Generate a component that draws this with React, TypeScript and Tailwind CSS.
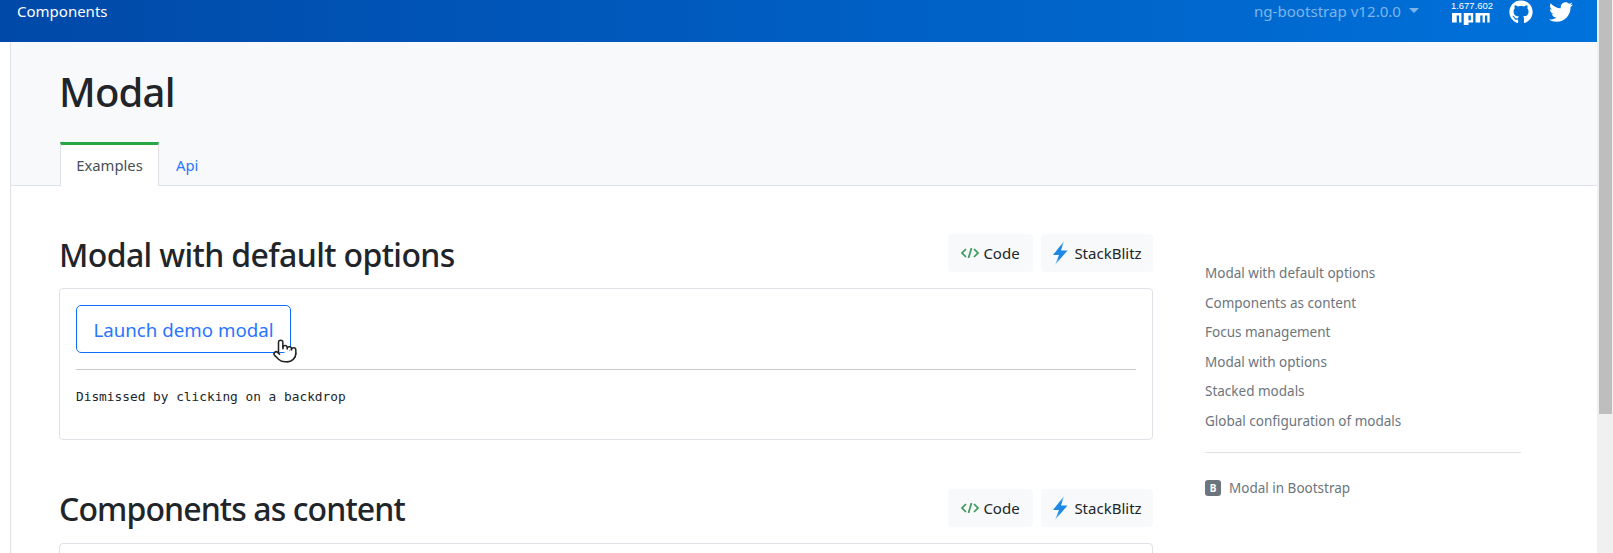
import { FaGithub, FaTwitter } from 'react-icons/fa';
import { Pointer } from 'lucide-react';

const tocLinks = [
  'Modal with default options',
  'Components as content',
  'Focus management',
  'Modal with options',
  'Stacked modals',
  'Global configuration of modals',
];

function DemoButtons() {
  return (
    <div className="flex gap-[8px]">
      <a className="flex h-[38px] w-[85px] items-center justify-center rounded bg-[#f8f9fa] text-[15px] text-[#212529]">
        <svg viewBox="0 0 18 10" className="mr-[4px] h-[10px] w-[18px]" fill="none" stroke="#3a9a5c" strokeWidth="1.7">
          <path d="M5 1 L1 5 L5 9" />
          <path d="M10.5 0 L7.5 10" />
          <path d="M13 1 L17 5 L13 9" />
        </svg>
        Code
      </a>
      <a className="flex h-[38px] w-[112px] items-center justify-center rounded bg-[#f8f9fa] text-[15px] text-[#212529]">
        <svg viewBox="0 0 16 24" className="mr-[6px] h-[24px] w-[16px]">
          <defs>
            <linearGradient id="bolt" x1="0" y1="1" x2="0" y2="0">
              <stop offset="0" stopColor="#9fd0fb" />
              <stop offset="0.3" stopColor="#1e88e5" />
              <stop offset="0.75" stopColor="#1e88e5" />
              <stop offset="1" stopColor="#9fd0fb" />
            </linearGradient>
          </defs>
          <path d="M12 0 L1 14 H7 L3 24 L15.5 9.5 H9 Z" fill="url(#bolt)" />
        </svg>
        StackBlitz
      </a>
    </div>
  );
}

function SectionHeader({ title, titleClass }: { title: string; titleClass: string }) {
  return (
    <div className="flex h-[38px] items-center justify-between">
      <h2 className={`pt-[4px] text-[32px] leading-[38px] font-medium text-[#212529] ${titleClass}`}>{title}</h2>
      <DemoButtons />
    </div>
  );
}

export default function App() {
  return (
    <div className="flex h-[553px] overflow-hidden bg-white font-['Noto_Sans','Open_Sans',sans-serif]">
      <div className="min-w-0 flex-1">
        <header className="flex h-[42px] items-start justify-between bg-gradient-to-r from-[#0049a8] to-[#0072db] text-white">
          <a className="ml-[17px] text-[15px] leading-[22px]">Components</a>
          <div className="flex items-start">
            <span className="text-[15.1px] leading-[22px] text-[#7fb4ea]">ng-bootstrap v12.0.0</span>
            <span className="ml-2 mt-[8px] h-0 w-0 border-x-[5px] border-t-[5px] border-x-transparent border-t-[#7fb4ea]" />
            <div className="ml-[33px] flex w-[40px] flex-col items-center">
              <span className="mt-[1px] whitespace-nowrap font-['Liberation_Sans',sans-serif] text-[9.5px] leading-[9px]">1.677.602</span>
              <svg viewBox="1 1 17 5" className="mt-[3px] h-[12px] w-[40px]" fill="white">
                <path d="M1 5h2V2h1v3h1V1H1ZM6 1v5h2V5h2V1ZM8 2h1v2H8ZM11 1v4h2V2h1v3h1V2h1v3h1V1Z" fillRule="evenodd" />
              </svg>
            </div>
            <FaGithub className="ml-[17px] h-[24px] w-[24px]" />
            <FaTwitter className="ml-[16px] h-[24px] w-[24px]" />
            <div className="w-[24px]" />
          </div>
        </header>

        <main className="ml-[10px] h-[511px] border-l border-[#dee2e6]">
          <div className="h-[144px] border-b border-[#dee2e6] bg-[#f8f9fa] pl-[49px]">
            <h1 className="-ml-[1px] pt-[26px] text-[40px] leading-[48px] font-medium tracking-[-0.8px] text-[#212529]">Modal</h1>
            <div className="mt-[26px] flex text-[14.8px]">
              <a className="flex h-[44px] w-[99px] items-center justify-center border-x border-t-[3px] border-x-[#dee2e6] border-t-[#28a745] bg-white text-[#495057]">
                Examples
              </a>
              <a className="flex h-[44px] items-center px-[17px] pt-[3px] text-[#2a75fd]">Api</a>
            </div>
          </div>

          <div className="flex pl-[48px]">
            <div className="relative w-[1094px] shrink-0">
              <div className="mt-[48px]">
                <SectionHeader title="Modal with default options" titleClass="tracking-[-0.62px]" />
              </div>
              <div className="mt-[16px] h-[152px] rounded border border-[#dee2e6] p-[16px]">
                <button className="h-[48px] w-[215px] rounded-[5px] border border-[#0d6efd] pt-[2px] text-[18.7px] text-[#2a75fd]">
                  Launch demo modal
                </button>
                <hr className="mt-[16px] border-[#c8c9ca]" />
                <pre className="mt-[18px] font-['DejaVu_Sans_Mono','Liberation_Mono',monospace] text-[12.8px] leading-[18px] text-[#212529]">
                  Dismissed by clicking on a backdrop
                </pre>
              </div>
              <div className="mt-[49px]">
                <SectionHeader title="Components as content" titleClass="-mt-[2px] tracking-[-0.9px]" />
              </div>
              <div className="mt-[16px] h-[40px] rounded border border-[#dee2e6]" />
              {/* mouse pointer caught in the screenshot */}
              <Pointer className="absolute left-[213px] top-[152px] h-[26px] w-[26px]" fill="white" stroke="#222" strokeWidth={1.4} />
            </div>

            <aside className="ml-[52px] w-[316px] pt-[73px] text-[13.5px] text-[#6c757d]">
              {tocLinks.map((link) => (
                <div key={link} className="h-[29.6px] leading-[29.6px]">
                  {link}
                </div>
              ))}
              <hr className="mt-[15px] border-[#dee2e6]" />
              <div className="mt-[25px] flex items-center leading-[21px]">
                <span className="mr-2 flex h-[16px] w-[16px] items-center justify-center rounded-[3px] bg-[#6c757d] text-[10px] font-bold text-white">
                  B
                </span>
                Modal in Bootstrap
              </div>
            </aside>
          </div>
        </main>
      </div>
      <div className="w-[16px] shrink-0 bg-[#f0f0f0] pl-[2px] pr-[1px]">
        <div className="h-[414px] bg-[#bebebe]" />
      </div>
    </div>
  );
}
